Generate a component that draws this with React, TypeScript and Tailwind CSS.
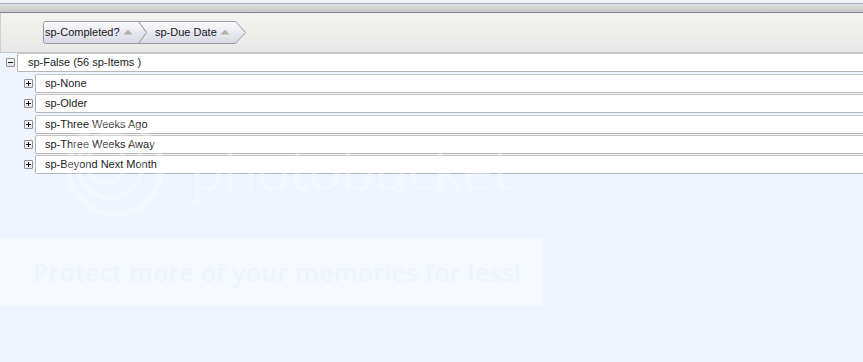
import React from "react";

const Tri = () => (
  <svg width="10" height="6" viewBox="0 0 10 6" className="ml-[3px] mt-[-1px]">
    <polygon points="0.5,5.5 5,0.8 9.5,5.5" fill="#b3afa3" />
  </svg>
);

const Expander = ({ open }: { open: boolean }) => (
  <div className="relative w-[9px] h-[9px] border border-[#8f8f8f] rounded-[1px] bg-gradient-to-b from-white to-[#e4e4e4] shrink-0">
    <div className="absolute left-[1px] top-[3px] w-[5px] h-px bg-[#111]" />
    {!open && <div className="absolute left-[3px] top-[1px] w-px h-[5px] bg-[#111]" />}
  </div>
);

const Row = ({ label, indent, open, mt }: { label: string; indent: boolean; open: boolean; mt: string }) => (
  <div className={`flex items-center ${mt} ${indent ? "pl-[24px]" : "pl-[6px]"}`}>
    <Expander open={open} />
    <div className={`ml-[2px] flex-1 h-[19px] bg-white border border-[#b6b6b6] border-t-[#c4c4c4] rounded-[2px] flex items-center ${indent ? "pl-[9px]" : "pl-[10px]"} text-[#1c1c1c] -mr-[4px]`}>
      {label}
    </div>
  </div>
);

export default function App() {
  const children = [
    { l: "sp-None", mt: "mt-[2px]" },
    { l: "sp-Older", mt: "mt-[1px]" },
    { l: "sp-Three Weeks Ago", mt: "mt-[2px]" },
    { l: "sp-Three Weeks Away", mt: "mt-[1px]" },
    { l: "sp-Beyond Next Month", mt: "mt-[1px]" },
  ];
  return (
    <div className="relative w-[863px] h-[362px] overflow-hidden bg-[#eef5fe] font-['Liberation_Sans',Arial,sans-serif] text-[11px] leading-none">
      <div className="h-[3px] bg-[#f3f4f7]" />
      <div className="h-px bg-[#a3acbd]" />
      <div className="h-[8px] bg-gradient-to-b from-[#dedede] to-[#c9c9c9]" />
      <div className="h-px bg-[#7e8496]" />
      <div className="h-[39px] bg-gradient-to-b from-[#f3f3ef] to-[#e8e8e8] border-l border-[#d0d0d0] pl-[42px] pt-[8px] flex">
        <div className="relative w-[104px] h-[23px] text-[#151515]">
          <svg className="absolute inset-0" width="104" height="23" viewBox="0 0 104 23">
            <defs>
              <linearGradient id="cg" x1="0" y1="0" x2="0" y2="1">
                <stop offset="0" stopColor="#fbfbfd" />
                <stop offset="1" stopColor="#d7d7e4" />
              </linearGradient>
            </defs>
            <path d="M0.5,2.5 Q0.5,0.5 2.5,0.5 L95.5,0.5 L103.5,11.5 L95.5,22.5 L2.5,22.5 Q0.5,22.5 0.5,20.5 Z" fill="url(#cg)" stroke="#9c9ca8" />
          </svg>
          <div className="relative h-full flex items-center pl-[2px]">
            sp-Completed?
            <Tri />
          </div>
        </div>
        <div className="relative w-[108px] h-[23px] -ml-[9px] text-[#151515]">
          <svg className="absolute inset-0" width="108" height="23" viewBox="0 0 108 23">
            <defs>
              <linearGradient id="cg2" x1="0" y1="0" x2="0" y2="1">
                <stop offset="0" stopColor="#fbfbfd" />
                <stop offset="1" stopColor="#d7d7e4" />
              </linearGradient>
            </defs>
            <path d="M0.5,0.5 L97.5,0.5 L107.5,11.5 L97.5,22.5 L0.5,22.5 L8.5,11.5 Z" fill="url(#cg2)" stroke="#9c9ca8" />
          </svg>
          <div className="relative h-full flex items-center pl-[17px]">
            sp-Due Date
            <Tri />
          </div>
        </div>
      </div>
      <div className="h-px bg-[#c6c6ca]" />
      <Row label="sp-False (56 sp-Items )" indent={false} open={true} mt="mt-0" />
      {children.map((c) => (
        <Row key={c.l} label={c.l} indent={true} open={false} mt={c.mt} />
      ))}

      {/* photobucket watermark */}
      <div className="absolute left-[60px] top-[118px] pointer-events-none opacity-30">
        <svg width="110" height="100" viewBox="0 0 110 100">
          <circle cx="55" cy="50" r="46" fill="none" stroke="#ffffff" strokeWidth="6" />
          <circle cx="50" cy="48" r="32" fill="none" stroke="#ffffff" strokeWidth="5" />
          <circle cx="46" cy="46" r="19" fill="none" stroke="#ffffff" strokeWidth="4" />
        </svg>
      </div>
      <div className="absolute left-[190px] top-[140px] pointer-events-none text-[56px] leading-none font-['Open_Sans',sans-serif] text-white/30 tracking-[-1px]">
        photobucket
      </div>
      <div className="absolute left-0 top-[238px] w-[543px] h-[68px] bg-[#f6faff] flex items-center pl-[33px] pointer-events-none">
        <span className="font-['Open_Sans',sans-serif] font-semibold text-[25px] text-[#eef5fd] tracking-[0.2px]">
          Protect more of your memories for less!
        </span>
      </div>
    </div>
  );
}
